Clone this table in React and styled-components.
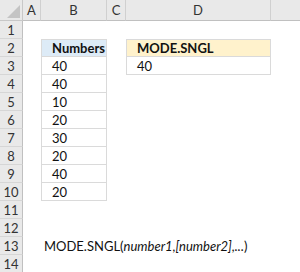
import React from 'react';
import styled, { createGlobalStyle } from 'styled-components';

const GlobalStyle = createGlobalStyle`
    html, body {
        margin: 0;
        padding: 0;
        background: #ffffff;
        overflow: hidden;
    }
    body {
        font-family: Lato, 'Liberation Sans', sans-serif;
    }
`;

const COLS = ['A', 'B', 'C', 'D', 'E'];
const LABELS = { A: 'A', B: 'B', C: 'C', D: 'D', E: '' };
const ROWS = 14;

const Frame = styled.div`
    width: 300px;
    height: 272px;
    overflow: hidden;
`;

const Sheet = styled.div`
    display: grid;
    grid-template-columns: 23px 18px 66px 19px 145px 30px;
    grid-template-rows: 21px repeat(${ROWS}, 18px);
    width: 301px;
    font-size: 13px;
    color: #111;
`;

const Corner = styled.div`
    position: relative;
    background: #e9e9e9;
    border-right: 1px solid #c8c8c8;
    border-bottom: 1px solid #c8c8c8;
    box-sizing: border-box;

    svg {
        position: absolute;
        right: 2px;
        bottom: 2px;
    }
`;

const ColHead = styled.div`
    display: flex;
    align-items: center;
    justify-content: center;
    background: #e9e9e9;
    border-right: 1px solid #d0d0d0;
    border-bottom: 1px solid #c0c0c0;
    box-sizing: border-box;
    font-size: 13px;
    color: #333;
`;

const RowHead = styled.div`
    display: flex;
    align-items: center;
    justify-content: center;
    background: #e9e9e9;
    border-right: 1px solid #c0c0c0;
    border-bottom: 1px solid #d6d6d6;
    box-sizing: border-box;
    font-size: 13px;
    color: #333;
`;

const Cell = styled.div`
    display: flex;
    align-items: center;
    box-sizing: border-box;
    padding-left: ${(p) => (p.$boxed ? '10px' : '3px')};
    white-space: nowrap;
    overflow: visible;
    background: ${(p) => p.$fill || 'transparent'};
    font-weight: ${(p) => (p.$bold ? 700 : 400)};
    border: ${(p) => (p.$boxed ? '1px solid #dadada' : 'none')};
    margin-top: ${(p) => (p.$boxed && !p.$first ? '-1px' : '0')};
    height: ${(p) => (p.$boxed && !p.$first ? '19px' : '18px')};
    position: relative;
    z-index: 1;

    i {
        font-style: italic;
    }
`;

const numbers = [40, 40, 10, 20, 30, 20, 40, 20];

// cell contents keyed by "col+row"
const cells = {
    B2: { text: 'Numbers', bold: true, fill: '#ddebf7', boxed: true, first: true },
    D2: { text: 'MODE.SNGL', bold: true, fill: '#fff2cc', boxed: true, first: true },
    D3: { text: '40', boxed: true },
    B13: {
        text: (
            <>
                MODE.SNGL(<i>number1,[number2],... </i>)
            </>
        ),
    },
};
numbers.forEach((n, i) => {
    cells['B' + (i + 3)] = { text: String(n), boxed: true };
});

function Corners() {
    return (
        <Corner>
            <svg width="13" height="13" viewBox="0 0 13 13">
                <polygon points="13,0 13,13 0,13" fill="#c4c4c4" />
            </svg>
        </Corner>
    );
}

function App() {
    const rows = [];
    for (let r = 1; r <= ROWS; r++) {
        rows.push(<RowHead key={'h' + r}>{r}</RowHead>);
        COLS.forEach((c) => {
            const d = cells[c + r];
            rows.push(
                <Cell
                    key={c + r}
                    $boxed={d && d.boxed}
                    $first={d && d.first}
                    $bold={d && d.bold}
                    $fill={d && d.fill}
                >
                    {d ? d.text : null}
                </Cell>
            );
        });
    }

    return (
        <>
            <GlobalStyle />
            <Frame>
                <Sheet>
                    <Corners />
                    {COLS.map((c) => (
                        <ColHead key={c}>{LABELS[c]}</ColHead>
                    ))}
                    {rows}
                </Sheet>
            </Frame>
        </>
    );
}

export default App;
